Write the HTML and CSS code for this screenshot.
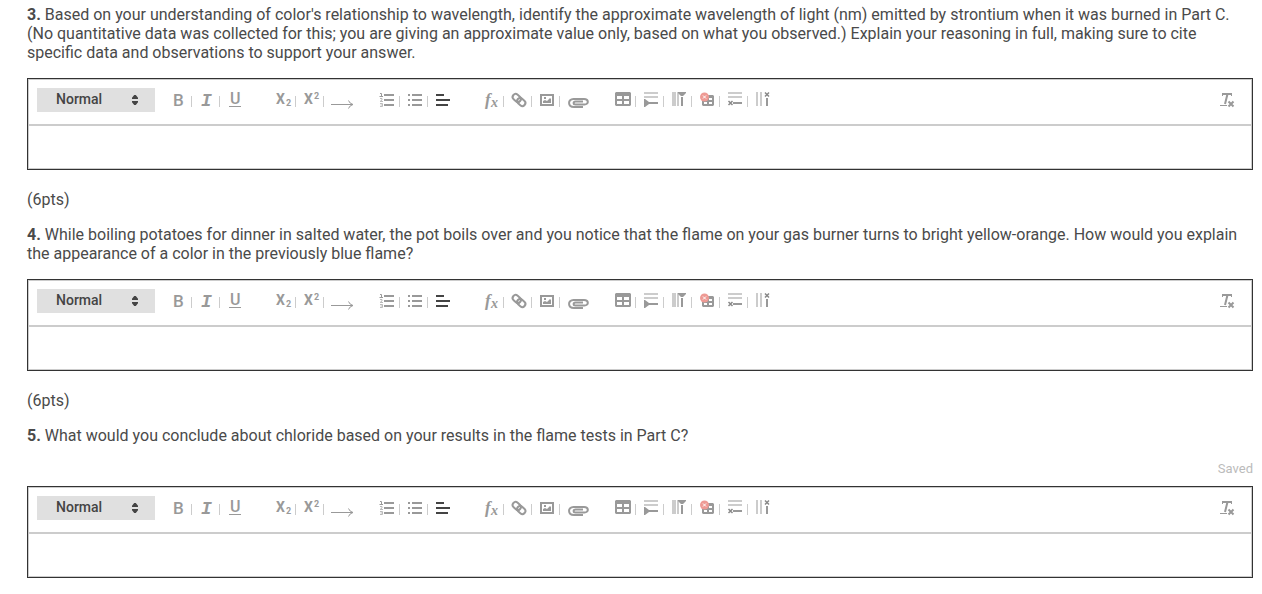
FILE: index.html
```html
<!DOCTYPE html>
<html lang="en">
<head>
<meta charset="utf-8">
<title>Flame tests</title>
<link rel="stylesheet" href="styles.css">
</head>
<body>
<main class="sheet">
  <section class="question">
    <p class="prompt"><strong>3.</strong> Based on your understanding of color's relationship to wavelength, identify the approximate wavelength of light (nm) emitted by strontium when it was burned in Part C. (No quantitative data was collected for this; you are giving an approximate value only, based on what you observed.) Explain your reasoning in full, making sure to cite specific data and observations to support your answer.</p>
    <div class="editor" data-label="Answer to question 3"></div>
    <p class="points">(6pts)</p>
  </section>
  <section class="question">
    <p class="prompt"><strong>4.</strong> While boiling potatoes for dinner in salted water, the pot boils over and you notice that the flame on your gas burner turns to bright yellow-orange. How would you explain the appearance of a color in the previously blue flame?</p>
    <div class="editor" data-label="Answer to question 4"></div>
    <p class="points">(6pts)</p>
  </section>
  <section class="question">
    <p class="prompt"><strong>5.</strong> What would you conclude about chloride based on your results in the flame tests in Part C?</p>
    <p class="status">Saved</p>
    <div class="editor" data-label="Answer to question 5"></div>
  </section>
</main>

<template id="editor-template">
  <div class="toolbar" role="toolbar">
    <div class="picker">
      <select class="picker-select" aria-label="Text style"><option>Normal</option><option>Heading 1</option><option>Heading 2</option></select>
      <svg class="picker-arrows" viewBox="0 0 8 12"><path d="M1 5V3.8L3.2 1H4.8L7 3.8V5ZM1 7V8.2L3.2 11H4.8L7 8.2V7Z"/></svg>
    </div>
    <div class="group">
      <button class="tool" type="button" aria-label="Bold"><svg class="icon" viewBox="0 0 28 24"><text class="letter" x="8" y="18">B</text></svg></button>
      <button class="tool" type="button" aria-label="Italic"><svg class="icon" viewBox="0 0 28 24"><text class="letter-mono" x="8" y="18">I</text></svg></button>
      <button class="tool" type="button" aria-label="Underline"><svg class="icon" viewBox="0 0 28 24"><text class="letter-u" x="9" y="16">U</text><path class="fill" d="M8 18h12v1H8z"/></svg></button>
    </div>
    <div class="group">
      <button class="tool" type="button" aria-label="Subscript"><svg class="icon" viewBox="0 0 28 24"><text class="letter-x" x="7" y="16">X</text><text class="digit" x="17" y="18">2</text></svg></button>
      <button class="tool" type="button" aria-label="Superscript"><svg class="icon" viewBox="0 0 28 24"><text class="letter-x" x="7" y="16">X</text><text class="digit" x="17" y="11">2</text></svg></button>
      <button class="tool" type="button" aria-label="Reaction arrow"><svg class="icon" viewBox="0 0 28 24"><path class="thin" d="M6 16.5H28M23.5 12.5Q24.5 15.5 28 16.5Q24.5 17.5 23.5 20.5"/></svg></button>
    </div>
    <div class="group">
      <button class="tool" type="button" aria-label="Numbered list"><svg class="icon" viewBox="0 0 28 24"><path class="fill" d="M11 6h10v2H11zM11 11h10v2H11zM11 16h10v2H11z"/><path class="thin" d="M7 5.5h1.500V8.500M6.500 8.500H10"/><path class="faint-stroke" d="M7 10.500H9V12L7 13.500H10M7 15.500H9.500V18.500H7M7.500 17H9.500"/></svg></button>
      <button class="tool" type="button" aria-label="Bullet list"><svg class="icon" viewBox="0 0 28 24"><path class="fill" d="M11 6h10v2H11zM11 11h10v2H11zM11 16h10v2H11zM7 6h2v2H7zM7 11h2v2H7zM7 16h2v2H7z"/></svg></button>
      <button class="tool" type="button" aria-label="Align left"><svg class="icon" viewBox="0 0 28 24"><path class="dark" d="M7 6h8v2H7zM7 11h14v2H7zM7 16h12v2H7z"/></svg></button>
    </div>
    <div class="group">
      <button class="tool" type="button" aria-label="Formula"><svg class="icon" viewBox="0 0 28 24"><text class="letter-f" x="8" y="17">f</text><text class="letter-fx" x="14" y="19">x</text></svg></button>
      <button class="tool" type="button" aria-label="Link"><svg class="icon" viewBox="0 0 28 24"><g transform="rotate(42 14 12)"><rect class="line" x="6.500" y="9" width="9" height="6" rx="3"/><rect class="line" x="12.500" y="9" width="9" height="6" rx="3"/></g></svg></button>
      <button class="tool" type="button" aria-label="Image"><svg class="icon" viewBox="0 0 28 24"><rect class="line" x="8" y="7" width="12" height="10"/><path class="fill" d="M10 15v-2l2-1 2 1 3-3 1 1v4zM11 9h2v2h-2z"/></svg></button>
      <button class="tool" type="button" aria-label="Attachment"><svg class="icon" viewBox="0 0 28 24"><path class="clip" d="M22 19H13C6.500 19 6.500 11 12.500 11H23C28 11 28 16.500 23.500 16.500H14.500C12 16.500 12 13.500 14.500 13.500H22"/></svg></button>
    </div>
    <div class="group">
      <button class="tool" type="button" aria-label="Insert table"><svg class="icon" viewBox="0 0 28 24"><path class="fill" fill-rule="evenodd" d="M7 4H21L22 5V17L21 18H7L6 17V5ZM8 8v3h5V8zM15 8v3h5V8zM8 13v3h5v-3zM15 13v3h5v-3z"/></svg></button>
      <button class="tool" type="button" aria-label="Insert row"><svg class="icon" viewBox="0 0 28 24"><path class="faint" d="M7 4h14v2H7zM7 8h14v2H7z"/><path class="fill" d="M11 14h10v2H11zM7 11h1l4 3v2l-4 3H7z"/></svg></button>
      <button class="tool" type="button" aria-label="Insert column"><svg class="icon" viewBox="0 0 28 24"><path class="faint" d="M7 4h4v14H7zM12 4h2v14h-2z"/><path class="fill" d="M16 9h2v9h-2zM13 4h8v1l-3 3h-2l-3-3z"/></svg></button>
      <button class="tool" type="button" aria-label="Delete table"><svg class="icon" viewBox="0 0 28 24"><path class="fill" fill-rule="evenodd" d="M9 7H20L21 8V17L20 18H10L9 17ZM11 10v2h3v-2zM16 10v2h3v-2zM11 14v2h3v-2zM16 14v2h3v-2z"/><circle class="red" cx="11.500" cy="9" r="4.500"/><path class="cross-white" d="M10 7.500l3 3M13 7.500l-3 3"/></svg></button>
      <button class="tool" type="button" aria-label="Delete row"><svg class="icon" viewBox="0 0 28 24"><path class="faint" d="M7 4h14v2H7zM7 8h14v2H7z"/><path class="fill" d="M12 14h9v2h-9z"/><path class="cross" d="M7.500 13l4 4M11.500 13l-4 4"/></svg></button>
      <button class="tool" type="button" aria-label="Delete column"><svg class="icon" viewBox="0 0 28 24"><path class="faint" d="M7 4h2v14H7zM11 4h2v14h-2z"/><path class="fill" d="M17 10h2v8h-2z"/><path class="cross" d="M16 4.500l4 4M20 4.500l-4 4"/></svg></button>
    </div>
    <button class="tool clear" type="button" aria-label="Clear formatting"><svg class="icon" viewBox="0 0 28 24"><path class="line" d="M7 6H17M12.500 6L10 16"/><path class="thin" d="M5 17.500h7M7.500 5V8M16.500 5V8"/><path class="line" d="M13.500 13.500l5 5M18.500 13.500l-5 5"/></svg></button>
  </div>
  <textarea class="answer" rows="1"></textarea>
</template>
<script src="editor.js"></script>
</body>
</html>
```
FILE: styles.css
```css
* { box-sizing: border-box; }
body {
  margin: 0;
  background: #fff;
  color: #4a4a4a;
  font: 16px/19px Roboto, sans-serif;
}
.sheet { padding: 5px 9px 16px 27px; }
.question { margin-bottom: 16px; }
.prompt { margin: 0 0 16px; }
.points { margin: 20px 0 0; }
.status {
  margin: 0 0 9px;
  color: #bbb;
  font-size: 13px;
  line-height: 16px;
  text-align: right;
}
.editor {
  border: 1px solid #333;
  outline: 1px solid #ccc;
  outline-offset: -2px;
}
.toolbar {
  display: flex;
  align-items: center;
  gap: 20px;
  height: 47px;
  padding: 0 9px 3px;
  border-bottom: 2px solid #ccc;
}
.picker {
  position: relative;
  width: 118px;
  margin-right: -10px;
}
.picker-select {
  display: block;
  width: 100%;
  height: 24px;
  padding: 0 19px 2px;
  border: 0;
  border-radius: 0;
  appearance: none;
  background: #e0e0e0;
  color: #444;
  font: 500 14px/22px Roboto, sans-serif;
}
.picker-arrows {
  position: absolute;
  top: 6px;
  right: 16px;
  width: 8px;
  height: 12px;
  fill: #444;
  pointer-events: none;
}
.group { display: flex; }
.tool {
  position: relative;
  width: 28px;
  height: 24px;
  padding: 0;
  border: 0;
  background: none;
}
.group .tool:not(:last-child)::after {
  content: "";
  position: absolute;
  top: 8px;
  right: 1px;
  width: 1px;
  height: 11px;
  background: #ccc;
}
.clear { margin-left: auto; }
.icon {
  display: block;
  width: 28px;
  height: 24px;
  fill: none;
}
.icon text { fill: #999; }
.fill { fill: #999; }
.faint { fill: #ccc; }
.dark { fill: #444; }
.red { fill: #ee9a94; }
.thin { stroke: #999; }
.cross { stroke: #888; stroke-width: 1.5; }
.faint-stroke { stroke: #bbb; }
.line { stroke: #999; stroke-width: 2; }
.clip { stroke: #999; stroke-width: 2; }
.cross-white { stroke: #fff; }
.letter { font: 500 17px Roboto, sans-serif; }
.letter-mono { font: italic bold 18px "Liberation Mono", monospace; }
.letter-u { font: 500 16px Roboto, sans-serif; }
.letter-x { font: bold 14px Roboto, sans-serif; }
.digit { font: bold 9px Roboto, sans-serif; }
.letter-f { font: italic bold 17px "Liberation Serif", serif; }
.letter-fx { font: italic bold 14px "Liberation Serif", serif; }
.answer {
  display: block;
  width: 100%;
  height: 43px;
  padding: 12px 15px;
  border: 0;
  outline: 0;
  resize: none;
  background: transparent;
  color: #444;
  font: 16px/19px Roboto, sans-serif;
}
```
FILE: editor.js
```js
const template = document.getElementById("editor-template");
document.querySelectorAll(".editor").forEach((editor) => {
  editor.append(template.content.cloneNode(true));
  editor.querySelector(".answer").setAttribute("aria-label", editor.dataset.label);
});
```
